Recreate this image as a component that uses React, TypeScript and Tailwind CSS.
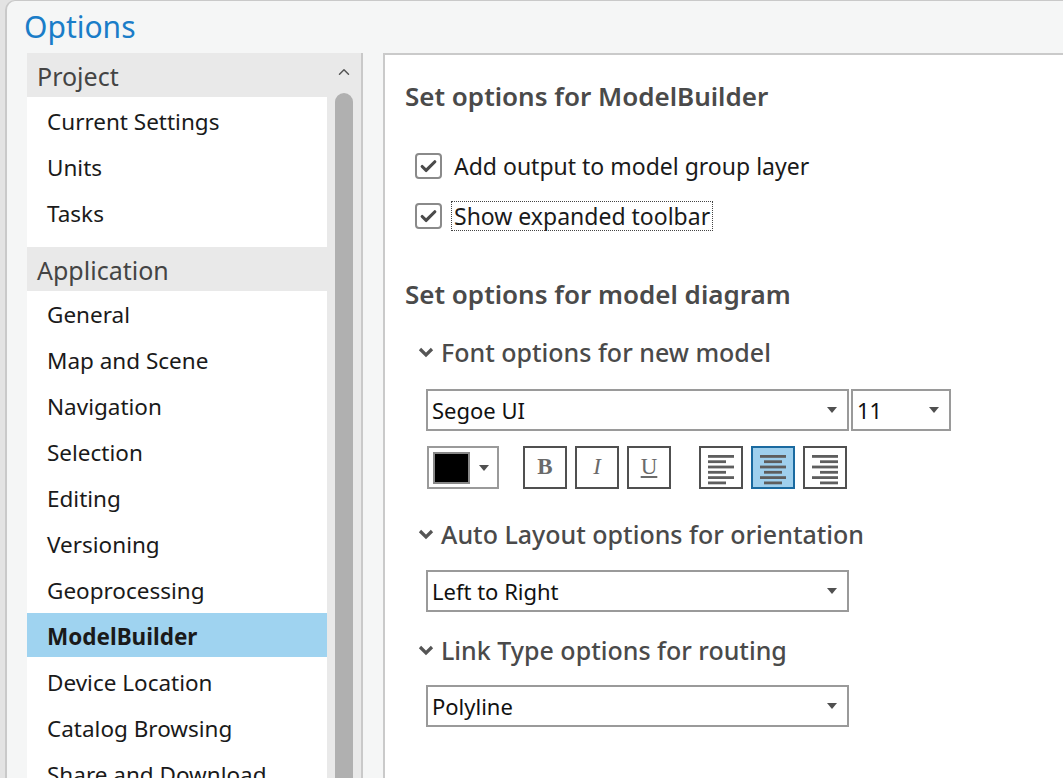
import { Check, ChevronUp } from 'lucide-react';

const font = { fontFamily: '"Noto Sans", "Open Sans", sans-serif' };
const serif = { fontFamily: '"Liberation Serif", serif' };

const projectItems = ['Current Settings', 'Units', 'Tasks'];
const appItems = [
  'General',
  'Map and Scene',
  'Navigation',
  'Selection',
  'Editing',
  'Versioning',
  'Geoprocessing',
  'ModelBuilder',
  'Device Location',
  'Catalog Browsing',
  'Share and Download',
];

function Caret() {
  return (
    <svg width="10" height="6" viewBox="0 0 10 6">
      <path d="M0 0 L10 0 L5 6 Z" fill="#505050" />
    </svg>
  );
}

function Dropdown({ value, width }: { value: string; width: string }) {
  return (
    <div className={`${width} h-[42px] border-2 border-[#9a9a9a] bg-white flex items-center justify-between pl-[4px] pr-[10px]`}>
      <span className="text-[22px] leading-[30px] text-[#111]">{value}</span>
      <Caret />
    </div>
  );
}

function SectionTitle({ children }: { children: string }) {
  return (
    <div className="flex items-center gap-[7px] pl-[13px] h-[32px] text-[25px] leading-[32px] font-medium text-[#4a4a4a]">
      <svg width="16" height="12" viewBox="0 0 16 12">
        <path d="M2 3 L8 9 L14 3" stroke="#555" strokeWidth="3.2" fill="none" />
      </svg>
      <span>{children}</span>
    </div>
  );
}

function AlignIcon({ kind }: { kind: 'left' | 'center' | 'right' }) {
  const widths = [26, 18, 26, 18, 26, 18];
  return (
    <svg width="30" height="34" viewBox="0 0 30 34">
      {widths.map((w, i) => {
        const x = kind === 'left' ? 2 : kind === 'right' ? 28 - w : 15 - w / 2;
        return <rect key={i} x={x} y={4 + i * 5.3} width={w} height="2.8" fill="#5e5e5e" />;
      })}
    </svg>
  );
}

function StyleButton({ children, active }: { children: React.ReactNode; active?: boolean }) {
  return (
    <div
      className={`w-[44px] h-[43px] border-2 flex items-center justify-center ${
        active ? 'border-[#1a6aa0] bg-[#9fd0ee]' : 'border-[#505050] bg-white'
      }`}
    >
      {children}
    </div>
  );
}

function CheckBox() {
  return (
    <div className="w-[27px] h-[26px] border-2 border-[#8a8a8a] rounded-[4px] bg-white flex items-center justify-center">
      <Check size={19} strokeWidth={4} className="text-[#4a4a4a]" />
    </div>
  );
}

export default function App() {
  return (
    <div className="w-[1063px] h-[778px] overflow-hidden bg-[#e3e3e3] pl-[5px]" style={font}>
      <div className="h-full border-l-2 border-t border-[#c9c9c9] rounded-tl-[10px] bg-[#f5f6f6] flex flex-col">
        <div className="h-[52px] shrink-0 pl-[17px] pt-[6px] text-[30px] leading-[40px] text-[#1a7dc8]">Options</div>

        <div className="flex flex-1 min-h-0">
          {/* 왼쪽 메뉴 */}
          <div className="ml-[20px] w-[336px] flex bg-[#e9e9e9] border-r-2 border-[#c9c9c9]">
            <div className="w-[300px] flex flex-col bg-white">
              <div className="h-[44px] shrink-0 bg-[#e9e9e9] pl-[10px] pt-[4px] flex items-center text-[25px] text-[#444]">
                Project
              </div>
              {projectItems.map((item) => (
                <div key={item} className="h-[46px] shrink-0 pl-[20px] pt-[3px] flex items-center text-[22.5px] text-[#1a1a1a]">
                  {item}
                </div>
              ))}
              <div className="h-[12px] shrink-0" />
              <div className="h-[44px] shrink-0 bg-[#e9e9e9] pl-[10px] pt-[4px] flex items-center text-[25px] text-[#444]">
                Application
              </div>
              {appItems.map((item) => (
                <div
                  key={item}
                  className={`h-[44px] mb-[2px] shrink-0 pl-[20px] pt-[3px] flex items-center text-[22.5px] text-[#1a1a1a] ${
                    item === 'ModelBuilder' ? 'bg-[#9fd3f0] font-bold' : ''
                  }`}
                >
                  {item}
                </div>
              ))}
            </div>
            <div className="flex-1 flex flex-col items-center">
              <ChevronUp size={18} strokeWidth={2} className="mt-[10px] text-[#555]" />
              <div className="mt-[12px] w-[18px] flex-1 bg-[#b0b0b0] rounded-t-full" />
            </div>
          </div>

          {/* 오른쪽 설정 */}
          <div className="ml-[20px] flex-1 bg-white border-l-2 border-t-2 border-[#cacaca] pl-[20px]">
            <div className="mt-[24px] text-[26px] font-semibold text-[#4a4a4a] leading-[34px]">
              Set options for ModelBuilder
            </div>

            <div className="mt-[38px] flex flex-col gap-[20px] pl-[10px]">
              <div className="flex items-center gap-[12px] h-[30px]">
                <CheckBox />
                <span className="text-[23px] leading-[30px] text-[#1a1a1a]">Add output to model group layer</span>
              </div>
              <div className="flex items-center gap-[9px] h-[30px]">
                <CheckBox />
                <span className="text-[23px] text-[#1a1a1a] border border-dotted border-[#444] px-[2px] leading-[28px]">
                  Show expanded toolbar
                </span>
              </div>
            </div>

            <div className="mt-[46px] text-[26px] font-semibold text-[#4a4a4a] leading-[34px]">
              Set options for model diagram
            </div>

            <div className="mt-[25px]">
              <SectionTitle>Font options for new model</SectionTitle>
            </div>

            <div className="mt-[21px] pl-[21px] flex gap-[2px]">
              <Dropdown value="Segoe UI" width="w-[423px]" />
              <Dropdown value="11" width="w-[100px]" />
            </div>

            <div className="mt-[15px] pl-[22px] flex items-center">
              <div className="w-[72px] h-[43px] border-2 border-[#9a9a9a] bg-white flex items-center pl-[4px] gap-[9px]">
                <div className="w-[37px] h-[32px] bg-black border-2 border-[#888]" />
                <Caret />
              </div>
              <div className="ml-[24px] flex gap-[8px]">
                <StyleButton>
                  <span className="text-[23px] font-bold text-[#6a6a6a]" style={serif}>B</span>
                </StyleButton>
                <StyleButton>
                  <span className="text-[23px] italic text-[#6a6a6a]" style={serif}>I</span>
                </StyleButton>
                <StyleButton>
                  <span className="text-[23px] underline text-[#6a6a6a]" style={serif}>U</span>
                </StyleButton>
              </div>
              <div className="ml-[28px] flex gap-[8px]">
                <StyleButton>
                  <AlignIcon kind="left" />
                </StyleButton>
                <StyleButton active>
                  <AlignIcon kind="center" />
                </StyleButton>
                <StyleButton>
                  <AlignIcon kind="right" />
                </StyleButton>
              </div>
            </div>

            <div className="mt-[29px]">
              <SectionTitle>Auto Layout options for orientation</SectionTitle>
            </div>
            <div className="mt-[20px] pl-[21px]">
              <Dropdown value="Left to Right" width="w-[423px]" />
            </div>

            <div className="mt-[22px]">
              <SectionTitle>Link Type options for routing</SectionTitle>
            </div>
            <div className="mt-[19px] pl-[21px]">
              <Dropdown value="Polyline" width="w-[423px]" />
            </div>
          </div>
        </div>
      </div>
    </div>
  );
}
